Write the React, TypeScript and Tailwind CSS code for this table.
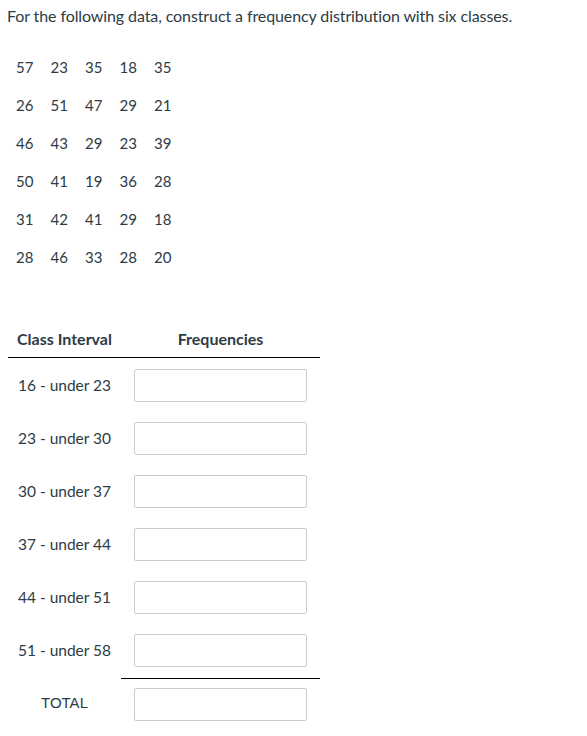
import React from 'react';

const data = [
  [57, 23, 35, 18, 35],
  [26, 51, 47, 29, 21],
  [46, 43, 29, 23, 39],
  [50, 41, 19, 36, 28],
  [31, 42, 41, 29, 18],
  [28, 46, 33, 28, 20],
];

const classes = ['16 - under 23', '23 - under 30', '30 - under 37', '37 - under 44', '44 - under 51', '51 - under 58'];

const App: React.FC = () => {
  return (
    <div className="min-h-[736px] bg-white text-[#2d3b45] font-['Lato',sans-serif]">
      <p className="pl-[7px] pt-[6px] text-[16px] leading-[20px] tracking-[-0.1px]">
        For the following data, construct a frequency distribution with six classes.
      </p>

      <div className="pl-[16px] pt-[22px] text-[15px]">
        {data.map((row, i) => (
          <div key={i} className="flex h-[38px] items-center">
            {row.map((n, j) => (
              <span key={j} className="w-[34.5px]">{n}</span>
            ))}
          </div>
        ))}
      </div>

      <div className="ml-[8px] mt-[44px] w-[312px] text-[15.5px]">
        <div className="flex h-[38px] items-center border-b border-black text-[16px] font-bold">
          <div className="w-[113px] text-center">Class Interval</div>
          <div className="flex-1 text-center">Frequencies</div>
        </div>
        {classes.map((c) => (
          <div key={c} className="flex h-[53px] items-center pt-[2px]">
            <div className="w-[113px] text-center">{c}</div>
            <div className="flex flex-1 justify-center">
              <input className="h-[33px] w-[173px] rounded-[2px] border border-[#c7cdd1] bg-white" />
            </div>
          </div>
        ))}
        <div className="flex h-[53px] items-center pt-[2px]">
          <div className="w-[113px] text-center font-['Liberation_Sans',sans-serif] text-[15px]">TOTAL</div>
          <div className="flex h-full flex-1 items-center justify-center border-t border-black">
            <input className="h-[33px] w-[173px] rounded-[2px] border border-[#c7cdd1] bg-white" />
          </div>
        </div>
      </div>
    </div>
  );
};

export default App;
